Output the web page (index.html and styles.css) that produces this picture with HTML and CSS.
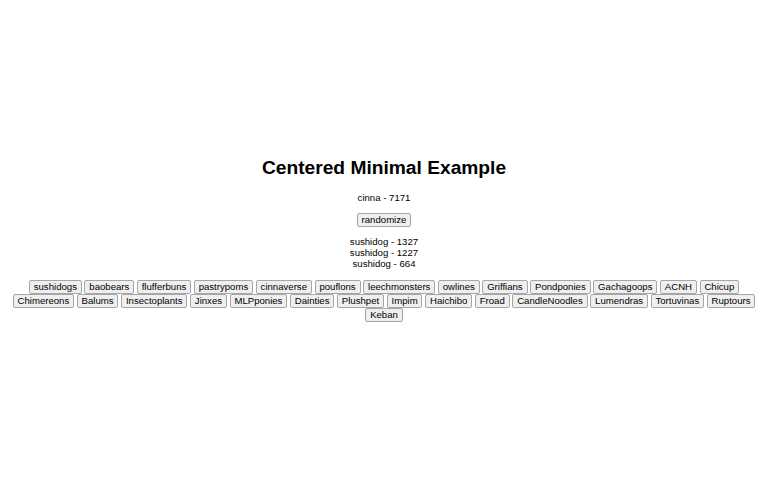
FILE: index.html
```html
<!DOCTYPE html>
<html lang="en">
<head>
<meta charset="utf-8">
<title>Centered Minimal Example</title>
<link rel="stylesheet" href="styles.css">
</head>
<body>
<main class="app">
  <h1 class="title">Centered Minimal Example</h1>
  <p class="current">cinna - 7171</p>
  <div class="action"><button class="btn">randomize</button></div>
  <div class="history">
    <div>sushidog - 1327</div>
    <div>sushidog - 1227</div>
    <div>sushidog - 664</div>
  </div>
  <div class="tags">
    <button class="btn">sushidogs</button> <button class="btn">baobears</button> <button class="btn">flufferbuns</button> <button class="btn">pastrypoms</button> <button class="btn">cinnaverse</button> <button class="btn">pouflons</button> <button class="btn">leechmonsters</button> <button class="btn">owlines</button> <button class="btn">Griffians</button> <button class="btn">Pondponies</button> <button class="btn">Gachagoops</button> <button class="btn">ACNH</button> <button class="btn">Chicup</button> <button class="btn">Chimereons</button> <button class="btn">Balums</button> <button class="btn">Insectoplants</button> <button class="btn">Jinxes</button> <button class="btn">MLPponies</button> <button class="btn">Dainties</button> <button class="btn">Plushpet</button> <button class="btn">Impim</button> <button class="btn">Haichibo</button> <button class="btn">Froad</button> <button class="btn">CandleNoodles</button> <button class="btn">Lumendras</button> <button class="btn">Tortuvinas</button> <button class="btn">Ruptours</button> <button class="btn">Keban</button>
  </div>
</main>
</body>
</html>
```
FILE: styles.css
```css
html, body {
  margin: 0;
  padding: 0;
  background: #ffffff;
}
body {
  height: 100vh;
  display: flex;
  flex-direction: column;
  justify-content: center;
  font-family: "Liberation Sans", Arial, sans-serif;
  font-size: 9.6px;
  line-height: 11px;
  color: #000000;
  text-align: center;
}
.app {
  padding: 0 8px 1px;
}
.title {
  font-size: 19.2px;
  line-height: 22px;
  font-weight: bold;
  margin: 0 0 13px;
}
.current {
  margin: 0 0 9.6px;
}
.action {
  margin: 0 0 9px;
  line-height: 14px;
}
.history {
  margin: 0 0 10.6px;
}
.tags {
  line-height: 14px;
}
.btn {
  font-family: "Liberation Sans", Arial, sans-serif;
  font-size: 9.6px;
  line-height: 12px;
  height: 14px;
  padding: 0 3.85px;
  margin: 0;
  border: 1px solid #a6a6a6;
  border-radius: 2px;
  background: #efefef;
  color: #000000;
  vertical-align: top;
  box-sizing: border-box;
}
```
